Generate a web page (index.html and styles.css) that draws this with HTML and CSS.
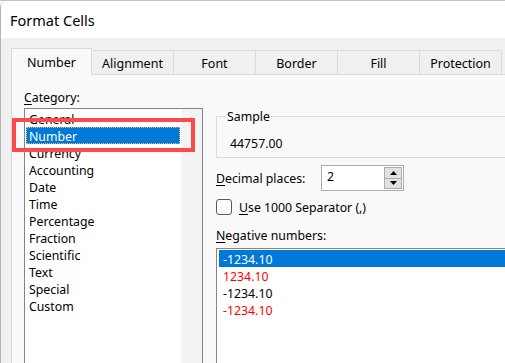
FILE: index.html
```html
<!DOCTYPE html>
<html>
<head>
<meta charset="utf-8">
<link rel="stylesheet" href="styles.css">
</head>
<body>
<div class="screen">
  <div class="window">
    <div class="titlebar">Format Cells</div>
    <div class="dialog-body">
      <div class="tabs">
        <div class="tab active">Number</div>
        <div class="tab">Alignment</div>
        <div class="tab">Font</div>
        <div class="tab">Border</div>
        <div class="tab">Fill</div>
        <div class="tab">Protection</div>
        <div class="tab-fill"></div>
      </div>
      <div class="panel">
        <div class="left-col">
          <div class="label"><u>C</u>ategory:</div>
          <div class="listbox cat-list">
            <div class="items">
              <div class="item">General</div>
              <div class="item selected focus">Number</div>
              <div class="item">Currency</div>
              <div class="item">Accounting</div>
              <div class="item">Date</div>
              <div class="item">Time</div>
              <div class="item">Percentage</div>
              <div class="item">Fraction</div>
              <div class="item">Scientific</div>
              <div class="item">Text</div>
              <div class="item">Special</div>
              <div class="item">Custom</div>
            </div>
            <div class="scroll-strip">
              <svg class="scroll-arrow" width="6" height="4" viewBox="0 0 6 4"><path d="M0 4 L3 0 L6 4 Z" fill="#8c8c8c"/></svg>
            </div>
          </div>
        </div>
        <div class="right-col">
          <fieldset class="sample">
            <legend>Sample</legend>
            <div class="sample-value">44757.00</div>
          </fieldset>
          <div class="decimal-row">
            <div class="decimal-label"><u>D</u>ecimal places:</div>
            <div class="spin-input">
              <div class="spin-value">2</div>
              <div class="spinner">
                <div class="spin-btn"><svg width="7" height="4" viewBox="0 0 7 4"><path d="M0 4 L3.5 0 L7 4 Z" fill="#000"/></svg></div>
                <div class="spin-btn"><svg width="7" height="4" viewBox="0 0 7 4"><path d="M0 0 L3.5 4 L7 0 Z" fill="#000"/></svg></div>
              </div>
            </div>
          </div>
          <div class="check-row">
            <div class="checkbox"></div>
            <div class="check-label"><u>U</u>se 1000 Separator (,)</div>
          </div>
          <div class="label neg-label"><u>N</u>egative numbers:</div>
          <div class="listbox neg-list">
            <div class="item selected">-1234.10</div>
            <div class="item red">1234.10</div>
            <div class="item">-1234.10</div>
            <div class="item red">-1234.10</div>
          </div>
        </div>
      </div>
    </div>
  </div>
  <div class="annotation"></div>
</div>
</body>
</html>
```
FILE: styles.css
```css
html, body {
  margin: 0;
  padding: 0;
}
body {
  width: 505px;
  height: 363px;
  overflow: hidden;
  background: #ffffff;
  font-family: "Noto Sans", "Open Sans", sans-serif;
  font-size: 12.3px;
  line-height: 17px;
  color: #000;
}
.screen {
  position: relative;
  height: 362px;
  border-top: 1px solid #c4c4c4;
}
.window {
  height: 100%;
  border-left: 1px solid #b4b4b4;
  border-top-left-radius: 6px;
  background: #f0f0f0;
  overflow: hidden;
}
.titlebar {
  height: 37px;
  background: #ffffff;
  padding-left: 9px;
  display: flex;
  align-items: center;
  font-size: 14.5px;
  line-height: 20px;
}
.dialog-body {
  padding: 10px 0 0 10px;
}
.tabs {
  display: flex;
  align-items: flex-end;
  height: 27px;
}
.tab {
  box-sizing: border-box;
  width: 82px;
  height: 25px;
  padding-top: 4px;
  border: 1px solid #dadada;
  border-left: none;
  background: #f0f0f0;
  text-align: center;
  flex: none;
  font-size: 12.5px;
}
.tab.active {
  width: 81px;
  height: 27px;
  padding-top: 5px;
  border: 1px solid #dadada;
  border-bottom: none;
  background: #f9f9f9;
}
.tab-fill {
  flex: 1;
  border-bottom: 1px solid #dadada;
}
.panel {
  height: 300px;
  background: #f9f9f9;
  border-left: 1px solid #dadada;
  padding: 13px 0 0 12px;
  display: grid;
  grid-template-columns: 179px 320px;
  column-gap: 13px;
  align-items: start;
}
.label {
  padding-top: 1px;
  height: 16px;
}
.label u, .decimal-label u, .check-label u {
  text-decoration-thickness: 1px;
  text-underline-offset: 2px;
}
.listbox {
  box-sizing: border-box;
  background: #ffffff;
  border: 1px solid #858585;
}
.cat-list {
  margin-top: 3px;
  height: 270px;
  display: flex;
}
.cat-list .items {
  flex: 1;
  padding: 1px;
}
.item {
  height: 16px;
  padding-top: 1px;
  padding-left: 3px;
  white-space: nowrap;
}
.item.selected {
  background: #0078d7;
  color: #ffffff;
}
.item.focus {
  outline: 1px dotted #d8c070;
  outline-offset: -1px;
}
.scroll-strip {
  width: 21px;
  background: #f3f3f3;
  display: flex;
  justify-content: center;
  align-items: flex-start;
}
.scroll-arrow {
  margin-top: 8px;
  margin-left: -1px;
}
.sample {
  margin: 20px 0 0 0;
  border: 1px solid #dcdcdc;
  padding: 0 0 5px 13px;
}
.sample legend {
  padding: 0 1px;
  margin-left: -4px;
}
.sample-value {
  padding-top: 10px;
}
.decimal-row {
  display: flex;
  align-items: center;
  margin-top: 7px;
  height: 26px;
}
.decimal-label {
  width: 105px;
}
.spin-input {
  box-sizing: border-box;
  width: 83px;
  height: 26px;
  border: 1px solid #adadad;
  background: #ffffff;
  display: flex;
  justify-content: space-between;
}
.spin-value {
  padding-left: 5px;
  line-height: 22px;
}
.spinner {
  display: flex;
  flex-direction: column;
  width: 18px;
  margin: 1px 1px 1px 0;
}
.spin-btn {
  flex: 1;
  box-sizing: border-box;
  background: #e1e1e1;
  border: 1px solid #adadad;
  display: flex;
  align-items: center;
  justify-content: center;
}
.spin-btn + .spin-btn {
  border-top: none;
}
.check-row {
  display: flex;
  align-items: center;
  margin-top: 8px;
  height: 16px;
}
.checkbox {
  box-sizing: border-box;
  width: 16px;
  height: 16px;
  border: 1px solid #5a5a5a;
  border-radius: 3px;
  background: #fdfdfd;
}
.check-label {
  margin-left: 7px;
}
.neg-label {
  margin-top: 11px;
}
.neg-list {
  margin-top: 5px;
  height: 130px;
  padding: 1px 0 0 2px;
}
.neg-list .item {
  padding-left: 4px;
}
.item.red {
  color: #ff0000;
}
.annotation {
  position: absolute;
  left: 12px;
  top: 117px;
  width: 183px;
  height: 34px;
  box-sizing: border-box;
  border: 4px solid #fa4a4a;
}
```
